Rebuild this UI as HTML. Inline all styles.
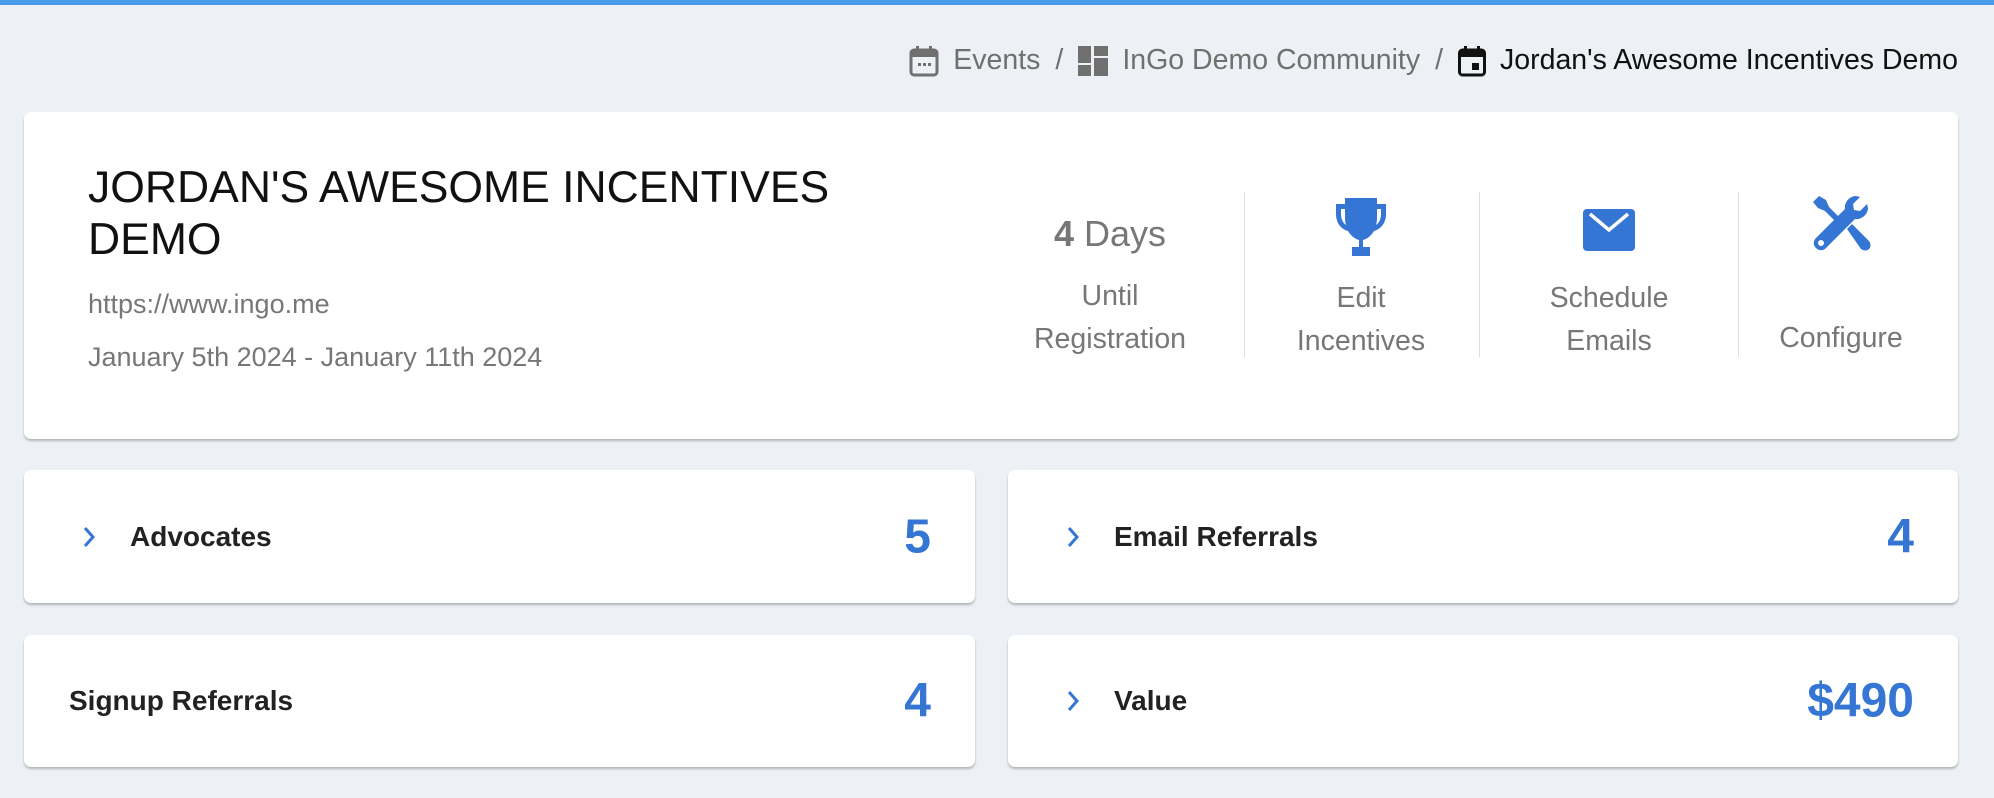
<!DOCTYPE html>
<html><head><meta charset="utf-8"><style>
*{margin:0;padding:0;box-sizing:border-box}
body{width:1994px;height:798px;background:#edf0f4;font-family:"Liberation Sans",sans-serif;position:relative;overflow:hidden}
.bar{position:absolute;left:0;top:0;width:1994px;height:5px;background:#4a9be8}
.bc{position:absolute;top:44px;right:36px;display:flex;align-items:center;font-size:28.5px;color:#707070;white-space:nowrap}
.bc .sep{margin:0 15px}
.bc svg{margin-right:14px}
.card{position:absolute;background:#fff;border-radius:7px;box-shadow:0 2px 2px rgba(0,0,0,.25)}
.title{position:absolute;left:64px;top:50px;font-size:44.5px;line-height:52px;color:#111;width:850px}
.sub{position:absolute;left:64px;font-size:27px;color:#777}
.col{position:absolute;text-align:center;color:#777;font-size:28.5px;line-height:43px}
.div{position:absolute;top:80px;width:1px;height:165px;background:#ddd}
.lbl{position:absolute;top:50%;transform:translateY(-50%);font-size:28px;font-weight:bold;color:#222}
.num{position:absolute;top:50%;transform:translateY(-50%);font-size:48px;font-weight:bold;color:#3575d3}
.chev{position:absolute;top:50%;transform:translateY(-50%)}
</style></head><body>
<div class="bar"></div>
<div class="bc">
<svg width="30" height="32" viewBox="0 0 30 32"><rect x="2" y="5" width="26" height="25" rx="3" fill="none" stroke="#707070" stroke-width="3"/><rect x="2" y="5" width="26" height="7" fill="#707070"/><rect x="7" y="1" width="3" height="6" fill="#707070"/><rect x="20" y="1" width="3" height="6" fill="#707070"/><rect x="9" y="18" width="3" height="3" fill="#707070"/><rect x="14" y="18" width="3" height="3" fill="#707070"/><rect x="19" y="18" width="3" height="3" fill="#707070"/></svg>
<span>Events</span><span class="sep">/</span>
<svg width="30" height="30" viewBox="0 0 30 30"><rect x="0" y="0" width="13" height="17" fill="#707070"/><rect x="0" y="19" width="13" height="11" fill="#707070"/><rect x="16" y="0" width="14" height="10" fill="#707070"/><rect x="16" y="12" width="14" height="18" fill="#707070"/></svg>
<span>InGo Demo Community</span><span class="sep">/</span>
<svg width="28" height="32" viewBox="0 0 28 32"><rect x="1.5" y="5" width="25" height="25" rx="3" fill="none" stroke="#111" stroke-width="3"/><rect x="1.5" y="5" width="25" height="7" fill="#111"/><rect x="6" y="1" width="3" height="6" fill="#111"/><rect x="19" y="1" width="3" height="6" fill="#111"/><rect x="14" y="18" width="7" height="7" fill="#111"/></svg>
<span style="color:#111">Jordan's Awesome Incentives Demo</span>
</div>

<div class="card" style="left:24px;top:112px;width:1934px;height:327px">
<div class="title">JORDAN'S AWESOME INCENTIVES DEMO</div>
<div class="sub" style="top:177px">https://www.ingo.me</div>
<div class="sub" style="top:230px">January 5th 2024 - January 11th 2024</div>
<div class="col" style="left:981px;width:210px;top:100px"><div style="font-size:36px;color:#777"><b>4</b> Days</div><div style="margin-top:20px">Until<br>Registration</div></div>
<div class="div" style="left:1220px"></div>
<div class="col" style="left:1237px;width:200px;top:86px">
<svg width="54" height="58" viewBox="0 0 54 58"><path d="M11 0h32v6h9v10c0 9-5 15-12 17-3 5-7 8-11 9v7h7v9H18v-9h7v-7c-4-1-8-4-11-9C7 31 2 25 2 16V6h9zM7 11v5c0 5 2 9 5 11-1-3-1-6-1-9v-7zM47 11h-4v7c0 3 0 6-1 9 3-2 5-6 5-11z" fill="#3575d3"/></svg>
<div style="margin-top:8px">Edit<br>Incentives</div></div>
<div class="div" style="left:1455px"></div>
<div class="col" style="left:1485px;width:200px;top:86px">
<svg width="54" height="58" viewBox="0 0 54 58"><rect x="1" y="11" width="52" height="42" rx="4" fill="#3575d3"/><path d="M8 16l19 16 19-16" fill="none" stroke="#fff" stroke-width="3.5"/></svg>
<div style="margin-top:8px">Schedule<br>Emails</div></div>
<div class="div" style="left:1714px"></div>
<div class="col" style="left:1727px;width:180px;top:82px">
<svg width="60" height="60" viewBox="0 0 60 60"><path d="M2 8l6-6 7 4 3 7 10 10-4 4-10-10-7-3z" fill="#3575d3"/><path d="M36 35l5-5 17 17c2 3 2 6 0 8s-5 2-8 0z" fill="#3575d3"/><path d="M45 2c-6 0-12 6-11 13L5 44c-3 3-3 7 0 10s7 3 10 0l29-29c7 1 13-5 13-11l-1-4-7 7-6-1-1-6 7-7z" fill="#3575d3"/><circle cx="10" cy="49" r="3" fill="#fff"/></svg>
<div style="margin-top:50px">Configure</div></div>
</div>

<div class="card" style="left:24px;top:470px;width:951px;height:133px">
<svg class="chev" style="left:58px" width="14" height="22" viewBox="0 0 14 22"><path d="M3 2l8 9-8 9" fill="none" stroke="#3575d3" stroke-width="3"/></svg>
<div class="lbl" style="left:106px">Advocates</div><div class="num" style="right:44px">5</div></div>
<div class="card" style="left:1008px;top:470px;width:950px;height:133px">
<svg class="chev" style="left:58px" width="14" height="22" viewBox="0 0 14 22"><path d="M3 2l8 9-8 9" fill="none" stroke="#3575d3" stroke-width="3"/></svg>
<div class="lbl" style="left:106px">Email Referrals</div><div class="num" style="right:44px">4</div></div>
<div class="card" style="left:24px;top:635px;width:951px;height:132px">
<div class="lbl" style="left:45px">Signup Referrals</div><div class="num" style="right:44px">4</div></div>
<div class="card" style="left:1008px;top:635px;width:950px;height:132px">
<svg class="chev" style="left:58px" width="14" height="22" viewBox="0 0 14 22"><path d="M3 2l8 9-8 9" fill="none" stroke="#3575d3" stroke-width="3"/></svg>
<div class="lbl" style="left:106px">Value</div><div class="num" style="right:44px">$490</div></div>
</body></html>
